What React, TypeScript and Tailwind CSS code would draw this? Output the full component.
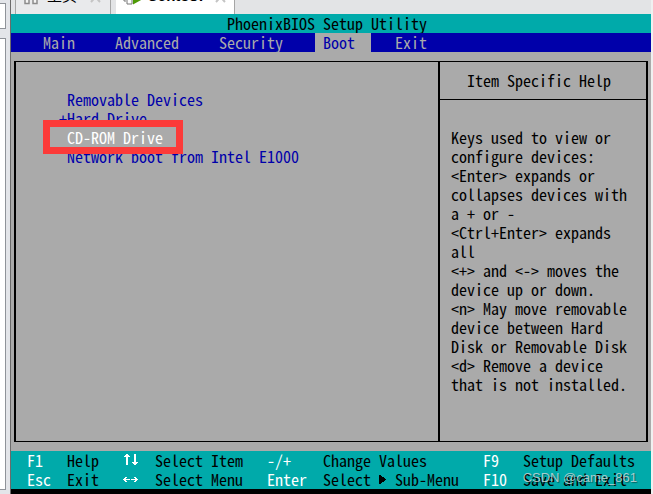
import type { ReactNode } from 'react';

const MENU_ITEMS = ['Main', 'Advanced', 'Security', 'Boot', 'Exit'];

const BOOT_ENTRIES = [
  { prefix: '', label: 'Removable Devices' },
  { prefix: '+', label: 'Hard Drive' },
  { prefix: '', label: 'CD-ROM Drive' },
  { prefix: '', label: 'Network boot from Intel E1000' },
];

const HELP_LINES = [
  'Keys used to view or',
  'configure devices:',
  '<Enter> expands or',
  'collapses devices with',
  'a + or -',
  '<Ctrl+Enter> expands',
  'all',
  '<+> and <-> moves the',
  'device up or down.',
  '<n> May move removable',
  'device between Hard',
  'Disk or Removable Disk',
  '<d> Remove a device',
  'that is not installed.',
];

function UpDownIcon() {
  return (
    <svg width="16" height="19" viewBox="0 0 16 19" fill="currentColor" shapeRendering="crispEdges" role="img" aria-label="Up / Down">
      <path d="M3 3h2v11H3zM2 4h4v1H2zM1 5h6v1H1z" />
      <path d="M11 3h2v11h-2zM10 12h4v1h-4zM9 11h6v1H9z" />
    </svg>
  );
}

function LeftRightIcon() {
  return (
    <svg width="16" height="19" viewBox="0 0 16 19" fill="currentColor" shapeRendering="crispEdges" role="img" aria-label="Left / Right">
      <path d="M0 9h7v1H0zM1 8h2v3H1zM2 7h2v1H2zM2 11h2v1H2z" />
      <path d="M8 9h7v1H8zM12 8h2v3h-2zM11 7h2v1h-2zM11 11h2v1h-2z" />
    </svg>
  );
}

function SubMenuIcon() {
  return (
    <svg width="8" height="19" viewBox="0 0 8 19" fill="currentColor" shapeRendering="crispEdges" aria-hidden="true">
      <path d="M0 5h1v9H0zM1 5h1v9H1zM2 6h1v7H2zM3 7h1v5H3zM4 7h1v5H4zM5 8h1v3H5zM6 9h1v1H6z" />
    </svg>
  );
}

function HomeTabIcon() {
  return (
    <svg width="16" height="14" viewBox="0 0 16 14" fill="#f4f4f4" stroke="#8c8c8c" strokeWidth="1.5" aria-hidden="true">
      <path d="M1 0h4v12.5H1zM9 0h4v12.5H9z" />
    </svg>
  );
}

function MachineTabIcon() {
  return (
    <svg width="20" height="14" viewBox="0 0 20 14" fill="none" aria-hidden="true">
      <path d="M1 0v10h2M4 0v13h5V0" stroke="#777777" />
      <path d="M10 0v13.5L19 8.5V0z" fill="#4e9a06" />
    </svg>
  );
}

function CloseIcon() {
  return (
    <svg width="12" height="12" viewBox="0 0 12 12" stroke="#c4c4c4" strokeWidth="2" aria-hidden="true">
      <path d="M1 1l9 10M10 1L1 11" />
    </svg>
  );
}

function BrowserTabs() {
  return (
    <div className="flex h-[14px] overflow-hidden bg-[#e3e4e6] pl-1 font-['Liberation_Sans','Noto_Sans_CJK_SC',sans-serif] text-[15px] font-normal leading-[10px] text-black">
      <button className="flex h-full w-24 items-start border-x border-[#a5a5a5] bg-[#e9eaec] px-2">
        <span className="-mt-[9px] flex w-full items-start">
          <HomeTabIcon />
          <span className="ml-[7px]">主页</span>
          <span className="ml-auto">
            <CloseIcon />
          </span>
        </span>
      </button>
      <button className="ml-[5px] flex h-full w-[119px] items-start border-r border-[#a5a5a5] bg-white px-[7px] font-bold">
        <span className="-mt-[9px] flex w-full items-start">
          <MachineTabIcon />
          <span className="ml-1">Centos7</span>
          <span className="ml-auto">
            <CloseIcon />
          </span>
        </span>
      </button>
    </div>
  );
}

function Key({ children }: { children: ReactNode }) {
  return <dt className="flex items-center text-white">{children}</dt>;
}

function Action({ children }: { children: ReactNode }) {
  return <dd className="flex items-center gap-2">{children}</dd>;
}

export default function App() {
  return (
    <div className="flex min-h-screen bg-[#f0f0f0] pr-[2px] font-['Noto_Sans_Mono_CJK_SC','Liberation_Mono',monospace] text-[16px] font-medium leading-[19px] whitespace-pre">
      {/* edge of the library sidebar */}
      <div className="flex w-[10px] shrink-0 flex-col gap-[9px] bg-[#e3e5e9] pt-[3px] pb-1 pr-1">
        <div className="h-[26px] border-y border-r border-[#8f9399] bg-white" />
        <div className="flex-1 border-y border-r border-[#8f9399] bg-white" />
      </div>

      <div className="flex flex-1 flex-col border-l border-[#6b6b6b] bg-black">
        <BrowserTabs />
        <h1 className="bg-[#00aaaa] pr-2 text-center text-black">PhoenixBIOS Setup Utility</h1>

        <nav className="flex gap-4 bg-[#0000aa] pl-6 text-[#aaaaaa]">
          {MENU_ITEMS.map(item => (
            <button
              key={item}
              className={item === 'Boot' ? 'bg-[#aaaaaa] pl-2 pr-4 text-[#0000aa]' : 'pl-2 pr-4'}
            >
              {item}
            </button>
          ))}
        </nav>

        <main className="flex flex-1 bg-[#aaaaaa] px-[3px] py-[9px]">
          <div className="flex flex-1 border-x-2 border-y border-black">
            <ul className="flex-1 pl-[43px] pt-7 text-[#0000aa]">
              {BOOT_ENTRIES.map(({ prefix, label }) => {
                const selected = label === 'CD-ROM Drive';
                return (
                  <li key={label} className={selected ? 'relative z-10 flex text-white' : 'flex'}>
                    <span className="w-2">{prefix}</span>
                    <span>{label}</span>
                    {selected && (
                      <span className="absolute -left-4 -top-2 h-[34px] w-[140px] border-7 border-[#fc3a39]" />
                    )}
                  </li>
                );
              })}
            </ul>

            <aside className="w-[208px] border-l-2 border-black text-black">
              <h2 className="border-b border-black py-[9px] pl-[27px]">Item Specific Help</h2>
              <div className="pl-[11px] pt-7">
                {HELP_LINES.map(line => (
                  <p key={line}>{line}</p>
                ))}
              </div>
            </aside>
          </div>
        </main>

        <footer className="relative mb-[5px] bg-[#00aaaa] text-black">
          <dl className="grid grid-cols-[40px_56px_32px_112px_56px_1fr_40px_112px] px-4">
            <Key>F1</Key>
            <Action>Help</Action>
            <Key>
              <UpDownIcon />
            </Key>
            <Action>Select Item</Action>
            <Key>-/+</Key>
            <Action>Change Values</Action>
            <Key>F9</Key>
            <Action>Setup Defaults</Action>

            <Key>Esc</Key>
            <Action>Exit</Action>
            <Key>
              <LeftRightIcon />
            </Key>
            <Action>Select Menu</Action>
            <Key>Enter</Key>
            <Action>
              Select
              <SubMenuIcon />
              Sub-Menu
            </Action>
            <Key>F10</Key>
            <Action>Save and Exit</Action>
          </dl>
          <span className="absolute bottom-[3px] right-3.5 font-['Liberation_Sans',sans-serif] text-[13px] font-normal leading-4 text-[#d5dcdc]/80 [text-shadow:1px_1px_1px_rgba(0,0,0,0.4)]">
            CSDN @came_861
          </span>
        </footer>
      </div>
    </div>
  );
}
